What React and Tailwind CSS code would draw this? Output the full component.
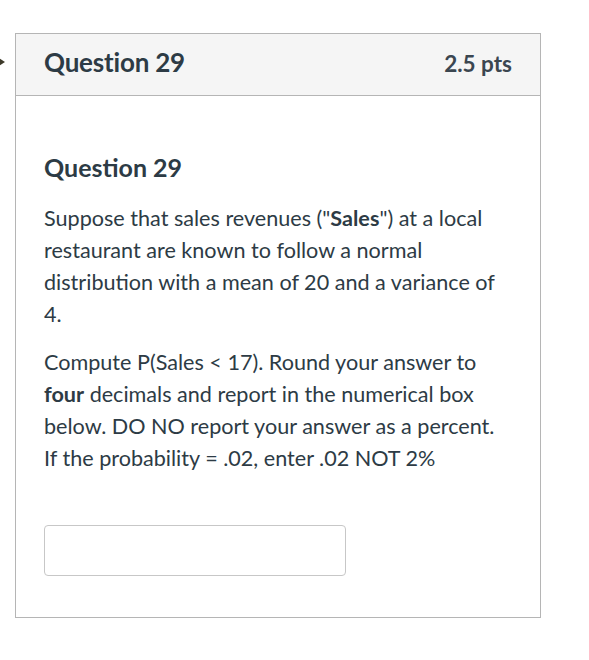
import React from "react";

export default function App() {
  return (
    <div className="relative min-h-[660px] w-[589px] bg-white font-['Lato','Liberation_Sans',sans-serif] text-[#2d3b45]">
      {/* little marker peeking in from the left */}
      <div className="absolute left-[-4px] top-[56px] h-0 w-0 border-y-[6px] border-l-[9px] border-y-transparent border-l-[#3d3a2a]" />

      <div className="pl-[15px] pt-[33px]">
        <div className="w-[526px] border border-[#b5b5b5] bg-white">
          {/* Header */}
          <div className="flex h-[62px] items-center justify-between border-b border-[#b5b5b5] bg-[#f5f5f5] pb-[4px] pl-[28px] pr-[28px]">
            <h2 className="mt-[-1px] text-[26px] font-bold leading-none tracking-[-0.2px]">Question 29</h2>
            <span className="mt-[3px] text-[22.5px] font-bold leading-none text-[#3b4650]">2.5 pts</span>
          </div>

          {/* Body */}
          <div className="pl-[28px] pr-[34px] pt-[59px] pb-[41px]">
            <h3 className="text-[25px] font-bold leading-none">Question 29</h3>

            <p className="mt-[22px] text-[21.6px] leading-[32px]">
              Suppose that sales revenues ("<strong className="font-bold">Sales</strong>") at a local
              restaurant are known to follow a normal distribution with a mean of 20 and a
              variance of 4.
            </p>

            <p className="mt-[16px] text-[21.6px] leading-[32px]">
              Compute P(Sales &lt; 17). Round your answer to <strong className="font-bold">four</strong>{" "}
              decimals and report in the numerical box below. DO NO report your answer as a
              percent. If the probability = .02, enter .02 NOT 2%
            </p>

            <input
              type="text"
              className="mt-[51px] block h-[51px] w-[302px] rounded-[4px] border border-[#c7c7c7] bg-white px-3 outline-none"
            />
          </div>
        </div>
      </div>
    </div>
  );
}
